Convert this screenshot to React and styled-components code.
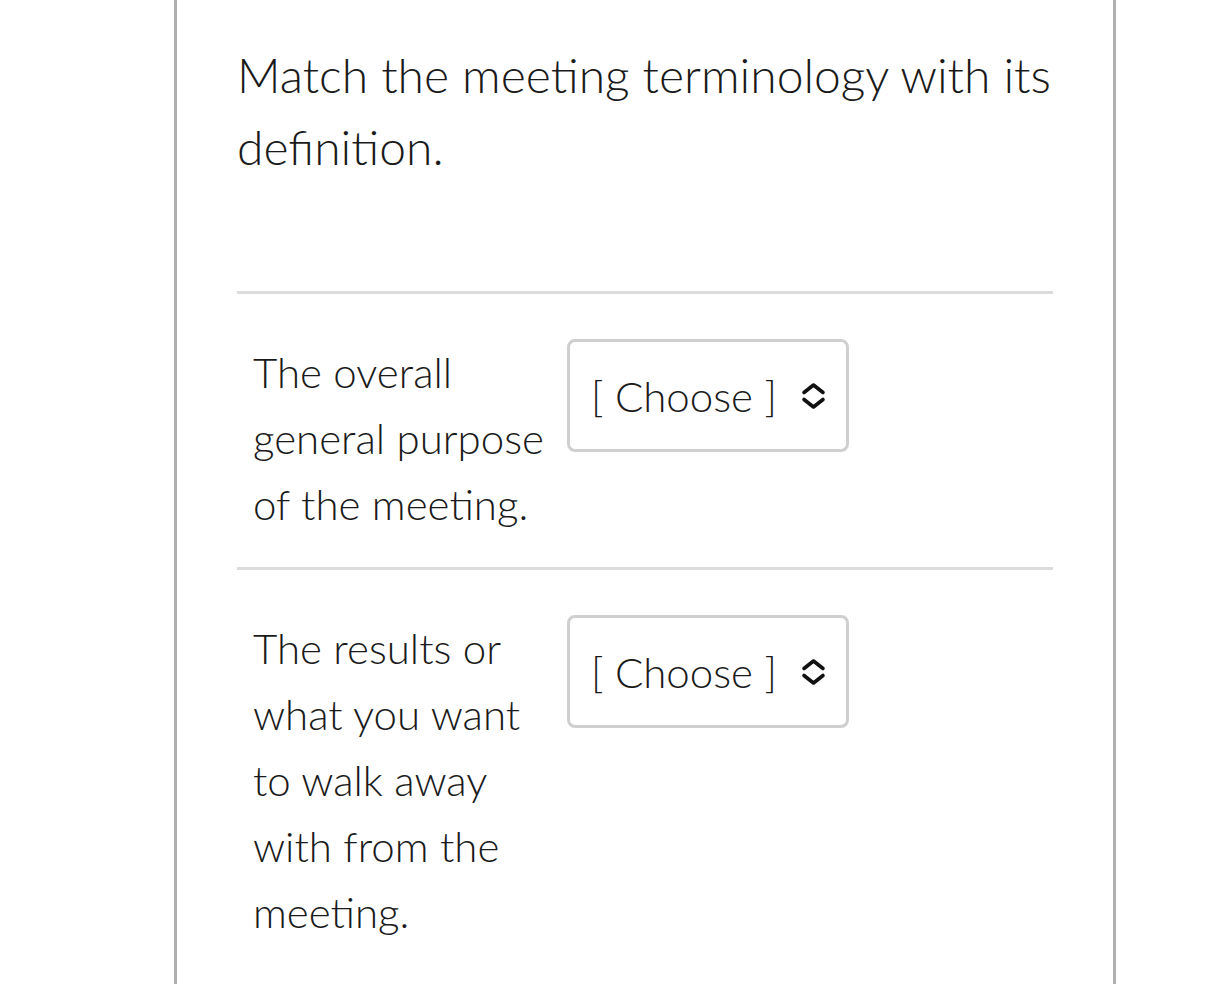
import styled, { createGlobalStyle } from "styled-components";

const GlobalStyle = createGlobalStyle`
  body {
    margin: 0;
    background: #fff;
    font-family: "Lato Light", "Lato", "Noto Sans", sans-serif;
    font-weight: 300;
    color: #1a1a1a;
  }
`;

const Page = styled.div`
  box-sizing: border-box;
  width: 942px;
  min-height: 100vh;
  margin-left: 174px;
  padding: 39px 60px 0 60px;
  border-left: 3px solid #b0b0b0;
  border-right: 3px solid #b0b0b0;
`;

const Question = styled.div`
  font-size: 48px;
  line-height: 72px;
  margin: 0 0 108px 0;
`;

const Row = styled.div`
  display: flex;
  align-items: flex-start;
  gap: 16px;
  border-top: 3px solid #dcdcdc;
  padding: 45px 0 30px 16px;
`;

const Term = styled.div`
  width: 298px;
  font-size: 42px;
  line-height: 66px;
`;

const Select = styled.div`
  box-sizing: border-box;
  width: 282px;
  height: 113px;
  border: 3px solid #cfcfcf;
  border-radius: 8px;
  display: flex;
  align-items: center;
  padding: 0 0 0 21px;
  gap: 23px;
  font-size: 42px;
  white-space: nowrap;
`;

const Chevrons = () => (
  <svg width="27" height="28" viewBox="0 0 27 28" fill="none" stroke="#111" strokeWidth="3.6" strokeLinecap="round" strokeLinejoin="round">
    <path d="M4 10.5 L13.5 3 L23 10.5" />
    <path d="M4 17.5 L13.5 25 L23 17.5" />
  </svg>
);

const rows = [
  "The overall general purpose of the meeting.",
  "The results or what you want to walk away with from the meeting.",
];

export default function App() {
  return (
    <>
      <GlobalStyle />
      <Page>
        <Question>Match the meeting terminology with its definition.</Question>
        {rows.map((text) => (
          <Row key={text}>
            <Term>{text}</Term>
            <Select>
              <span>[ Choose ]</span>
              <Chevrons />
            </Select>
          </Row>
        ))}
      </Page>
    </>
  );
}
